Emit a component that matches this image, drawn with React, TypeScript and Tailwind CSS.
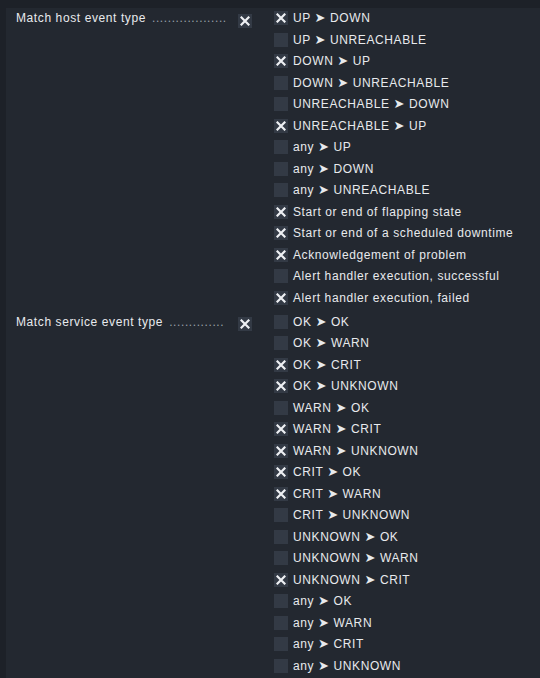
const hostEvents: [string, boolean][] = [
  ["UP|DOWN", true],
  ["UP|UNREACHABLE", false],
  ["DOWN|UP", true],
  ["DOWN|UNREACHABLE", false],
  ["UNREACHABLE|DOWN", false],
  ["UNREACHABLE|UP", true],
  ["any|UP", false],
  ["any|DOWN", false],
  ["any|UNREACHABLE", false],
  ["Start or end of flapping state", true],
  ["Start or end of a scheduled downtime", true],
  ["Acknowledgement of problem", true],
  ["Alert handler execution, successful", false],
  ["Alert handler execution, failed", true],
];

const serviceEvents: [string, boolean][] = [
  ["OK|OK", false],
  ["OK|WARN", false],
  ["OK|CRIT", true],
  ["OK|UNKNOWN", true],
  ["WARN|OK", false],
  ["WARN|CRIT", true],
  ["WARN|UNKNOWN", true],
  ["CRIT|OK", true],
  ["CRIT|WARN", true],
  ["CRIT|UNKNOWN", false],
  ["UNKNOWN|OK", false],
  ["UNKNOWN|WARN", false],
  ["UNKNOWN|CRIT", true],
  ["any|OK", false],
  ["any|WARN", false],
  ["any|CRIT", false],
  ["any|UNKNOWN", false],
];

function Checkbox({ checked }: { checked: boolean }) {
  return (
    <span className="flex h-[14px] w-[14px] shrink-0 items-center justify-center bg-[#333a45]">
      {checked && (
        <svg width="10" height="10" viewBox="0 0 10 10">
          <path d="M1.5 1.5 L8.5 8.5 M8.5 1.5 L1.5 8.5" stroke="#eef0f3" strokeWidth="2.2" strokeLinecap="square" />
        </svg>
      )}
    </span>
  );
}

function EventText({ text }: { text: string }) {
  const parts = text.split("|");
  if (parts.length === 1) return <span>{text}</span>;
  return (
    <span>
      {parts[0]} <span className="text-[13px] leading-none">➤</span> {parts[1]}
    </span>
  );
}

function Section({ label, dots, items }: { label: string; dots: number; items: [string, boolean][] }) {
  return (
    <div className="flex">
      <div className="flex h-[21.5px] w-[208px] items-center whitespace-nowrap">
        <span>{label}</span>
        <span className="ml-[6px] text-[#9aa0a8]">{".".repeat(dots)}</span>
      </div>
      <div className="ml-[14px] w-[36px] pt-[6px]">
        <Checkbox checked={true} />
      </div>
      <div className="flex flex-col">
        {items.map(([text, on]) => (
          <div key={text} className="flex h-[21.5px] items-center gap-[5px] whitespace-nowrap">
            <Checkbox checked={on} />
            <EventText text={text} />
          </div>
        ))}
      </div>
    </div>
  );
}

export default function App() {
  return (
    <div
      className="h-[678px] w-[540px] overflow-hidden bg-[#1d2128] pt-[7.5px] pl-[6px] text-[12px] tracking-[0.6px] text-[#e8eaed]"
      style={{ fontFamily: '"Liberation Sans", "DejaVu Sans", Arial, sans-serif' }}
    >
      <div className="h-full bg-[#232830] pl-[10px]">
        <Section label="Match host event type" dots={19} items={hostEvents} />
        <div className="h-[2.5px]" />
        <Section label="Match service event type" dots={14} items={serviceEvents} />
      </div>
    </div>
  );
}
